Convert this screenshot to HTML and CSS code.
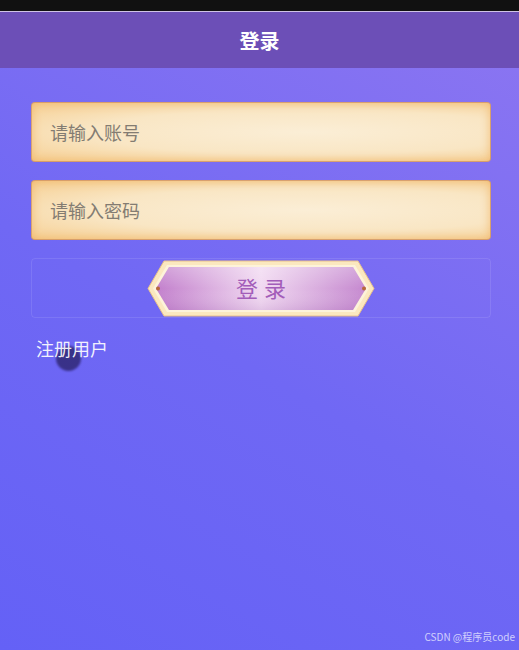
FILE: index.html
```html
<!DOCTYPE html>
<html lang="zh">
<head>
<meta charset="utf-8">
<title>登录</title>
<link rel="stylesheet" href="styles.css">
</head>
<body>
<div class="page">
  <div class="topbar"></div>
  <header class="header">登录</header>
  <main class="content">
    <div class="field">请输入账号</div>
    <div class="field">请输入密码</div>
    <div class="btn-row">
      <div class="hex-btn">
        <svg class="hex-svg" width="228" height="57" viewBox="0 0 228 57">
          <defs>
            <linearGradient id="g" x1="0" y1="0" x2="1" y2="0">
              <stop offset="0" stop-color="#c27fcc"/>
              <stop offset="0.5" stop-color="#f1d9f1"/>
              <stop offset="1" stop-color="#c588cf"/>
            </linearGradient>
            <linearGradient id="v" x1="0" y1="0" x2="0" y2="1">
              <stop offset="0" stop-color="#ffffff" stop-opacity="0.25"/>
              <stop offset="0.5" stop-color="#ffffff" stop-opacity="0"/>
              <stop offset="1" stop-color="#8a4aa0" stop-opacity="0.15"/>
            </linearGradient>
          </defs>
          <polygon points="17,1 211,1 227,28.5 211,56 17,56 1,28.5" fill="#fbe8bf" stroke="#e8c08a" stroke-width="1"/>
          <polygon points="20,5 208,5 222,28.5 208,52 20,52 6,28.5" fill="#fdf3da"/>
          <polygon points="22,7 206,7 219,28.5 206,50 22,50 9,28.5" fill="url(#g)"/>
          <polygon points="22,7 206,7 219,28.5 206,50 22,50 9,28.5" fill="url(#v)"/>
          <circle cx="11" cy="28.5" r="2" fill="#b86a3a"/>
          <circle cx="217" cy="28.5" r="2" fill="#b86a3a"/>
        </svg>
        <span class="hex-text">登录</span>
      </div>
    </div>
    <div class="link-row">
      <span class="link">注册用户</span>
      <span class="touch"></span>
    </div>
  </main>
  <div class="watermark">CSDN @程序员code</div>
</div>
</body>
</html>
```

FILE: styles.css
```css
html, body {
  margin: 0;
  padding: 0;
}
body {
  font-family: "Noto Sans CJK SC", "Noto Sans", sans-serif;
  background: #111;
}
.page {
  position: relative;
  width: 519px;
  height: 650px;
  overflow: hidden;
  display: flex;
  flex-direction: column;
  background: linear-gradient(30deg, #6461f6 0%, #7068f4 45%, #8d76f1 100%);
}
.topbar {
  height: 11px;
  background: #111111;
  border-bottom: 1px solid #cfc3e6;
  flex: none;
}
.header {
  height: 56px;
  flex: none;
  background: #6c4fb7;
  color: #ffffff;
  font-weight: 700;
  font-size: 20px;
  display: flex;
  align-items: center;
  justify-content: center;
}
.content {
  padding: 34px 28px 0 31px;
  display: flex;
  flex-direction: column;
  gap: 18px;
}
.field {
  height: 60px;
  box-sizing: border-box;
  border: 1px solid rgba(205, 140, 90, 0.75);
  border-radius: 4px;
  background: radial-gradient(ellipse at 60% 50%, #fbeed6 0%, #f9e6c4 55%, #f6cf92 100%);
  box-shadow: inset 0 0 10px rgba(240, 180, 100, 0.8);
  color: #837c72;
  font-size: 18px;
  display: flex;
  align-items: center;
  padding-left: 18px;
}
.btn-row {
  height: 60px;
  box-sizing: border-box;
  border: 1px solid rgba(255, 255, 255, 0.1);
  border-radius: 4px;
  display: flex;
  align-items: center;
  justify-content: center;
}
.hex-btn {
  display: grid;
  width: 228px;
  height: 57px;
}
.hex-svg {
  grid-area: 1 / 1;
  display: block;
}
.hex-text {
  grid-area: 1 / 1;
  display: flex;
  align-items: center;
  justify-content: center;
  color: #a35db9;
  font-size: 22px;
  letter-spacing: 6px;
  padding-left: 6px;
  padding-bottom: 2px;
}
.link-row {
  position: relative;
  padding-left: 5px;
  height: 40px;
}
.link {
  color: rgba(255, 255, 255, 0.92);
  font-size: 18px;
  line-height: 24px;
  position: relative;
  z-index: 1;
}
.touch {
  position: absolute;
  left: 25px;
  top: 10px;
  width: 25px;
  height: 25px;
  border-radius: 50%;
  background: rgba(40, 32, 100, 0.75);
  filter: blur(1px);
}
.watermark {
  position: absolute;
  right: 4px;
  bottom: 6px;
  font-size: 10px;
  color: rgba(235, 235, 255, 0.8);
  font-family: "Noto Sans CJK SC", "Liberation Sans", sans-serif;
}
```
